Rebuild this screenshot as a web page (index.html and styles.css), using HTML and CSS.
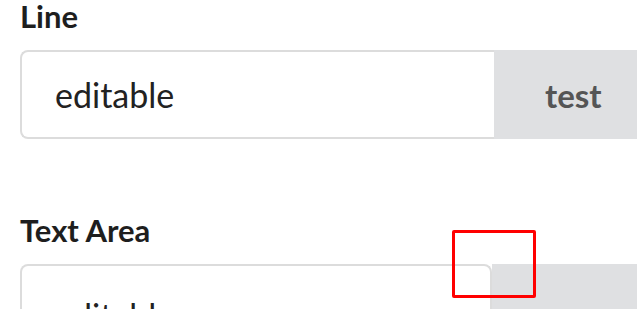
FILE: index.html
```html
<!DOCTYPE html>
<html>
<head>
<meta charset="utf-8">
<link rel="stylesheet" href="styles.css">
</head>
<body>
<div class="page">
  <div class="field">
    <label class="label">Line</label>
    <div class="group">
      <div class="control">editable</div>
      <div class="addon">test</div>
    </div>
  </div>
  <div class="field field-area">
    <label class="label">Text Area</label>
    <div class="group">
      <div class="control area">editable</div>
      <div class="addon addon-area"></div>
    </div>
  </div>
  <div class="highlight"></div>
</div>
</body>
</html>
```
FILE: styles.css
```css
html, body {
  margin: 0;
  padding: 0;
  background: #fff;
  overflow: hidden;
}
.page {
  position: relative;
  width: 637px;
  height: 309px;
  overflow: hidden;
  padding-left: 20px;
  box-sizing: border-box;
  font-family: Lato, "Noto Sans", sans-serif;
  color: #222;
}
.field {
  display: flex;
  flex-direction: column;
}
.label {
  font-weight: 700;
  font-size: 31px;
  line-height: 32px;
  margin-bottom: 18px;
  color: #1e1e1e;
}
.group {
  display: flex;
}
.control {
  width: 474px;
  box-sizing: border-box;
  border: 2px solid #dcdcdc;
  border-radius: 8px 0 0 8px;
  border-right: none;
  font-size: 34px;
  line-height: 40px;
  padding: 23px 30px 22px 33px;
  color: #222;
  background: #fff;
}
.addon {
  flex: 1;
  background: #dfe0e2;
  color: #555;
  font-size: 33px;
  line-height: 40px;
  font-weight: 700;
  padding: 25px 0 24px 51px;
}
.field-area {
  margin-top: 75px;
}
.control.area {
  width: 472px;
  border-right: 2px solid #dcdcdc;
  border-radius: 8px 8px 0 0;
  border-bottom: none;
  padding-top: 30px;
  height: 80px;
}
.addon-area {
  height: 80px;
}
.highlight {
  position: absolute;
  left: 452px;
  top: 230px;
  width: 84px;
  height: 68px;
  box-sizing: border-box;
  border: 3px solid #ff0000;
  border-radius: 2px;
}
```
